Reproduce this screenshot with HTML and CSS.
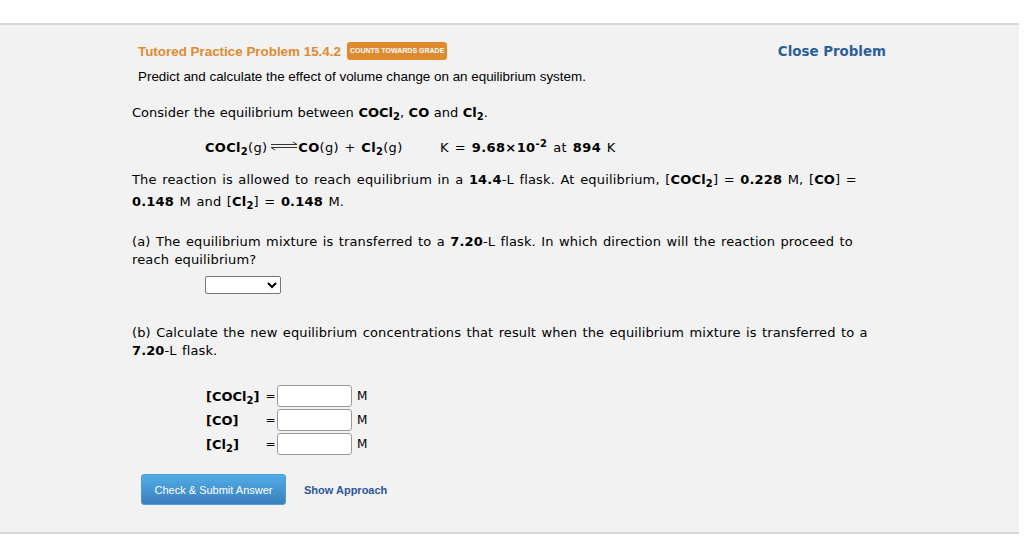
FILE: index.html
```html
<!DOCTYPE html>
<html>
<head>
<meta charset="utf-8">
<link rel="stylesheet" href="styles.css">
</head>
<body>
<div class="panel">
  <div class="header">
    <div class="head-left">
      <div class="title-line"><span class="title">Tutored Practice Problem 15.4.2</span><span class="badge">COUNTS TOWARDS GRADE</span></div>
      <div class="subtitle">Predict and calculate the effect of volume change on an equilibrium system.</div>
    </div>
    <a class="close">Close Problem</a>
  </div>
  <div class="content">
    <p class="intro">Consider the equilibrium between <b>COCl<sub>2</sub></b>, <b>CO</b> and <b>Cl<sub>2</sub></b>.</p>
    <div class="equation">
      <span class="rxn"><b>COCl<sub>2</sub></b>(g)<svg class="eqarrow" width="28" height="10" viewBox="0 0 28 10"><path d="M1 3.5H27L23 1" fill="none" stroke="#333" stroke-width="1"/><path d="M27 6.5H1L5 9" fill="none" stroke="#333" stroke-width="1"/></svg><b>CO</b>(g) + <b>Cl<sub>2</sub></b>(g)</span>
      <span class="kval">K = <b>9.68×10<sup>-2</sup></b> at <b>894</b> K</span>
    </div>
    <p class="para">The reaction is allowed to reach equilibrium in a <b>14.4</b>-L flask. At equilibrium, [<b>COCl<sub>2</sub></b>] = <b>0.228</b> M, [<b>CO</b>] = <b>0.148</b> M and [<b>Cl<sub>2</sub></b>] = <b>0.148</b> M.</p>
    <p class="qa">(a) The equilibrium mixture is transferred to a <b>7.20</b>-L flask. In which direction will the reaction proceed to reach equilibrium?</p>
    <div class="select-row"><select class="dir"><option></option></select></div>
    <p class="qb">(b) Calculate the new equilibrium concentrations that result when the equilibrium mixture is transferred to a <b>7.20</b>-L flask.</p>
    <div class="answers">
      <div class="arow"><span class="lbl">[COCl<sub>2</sub>]</span><span class="eq">=</span><input class="box" type="text"><span class="unit">M</span></div>
      <div class="arow"><span class="lbl">[CO]</span><span class="eq">=</span><input class="box" type="text"><span class="unit">M</span></div>
      <div class="arow"><span class="lbl">[Cl<sub>2</sub>]</span><span class="eq">=</span><input class="box" type="text"><span class="unit">M</span></div>
    </div>
    <div class="actions">
      <button class="submit">Check &amp; Submit Answer</button>
      <a class="approach">Show Approach</a>
    </div>
  </div>
</div>
</body>
</html>
```
FILE: styles.css
```css
html, body {
  margin: 0;
  padding: 0;
  background: #ffffff;
}
body {
  font-family: "DejaVu Sans", Verdana, sans-serif;
  font-size: 13px;
  color: #000;
}
.panel {
  margin-top: 23px;
  width: 1019px;
  height: 511px;
  box-sizing: border-box;
  background: #f2f2f2;
  border-top: 2px solid #d8d8d8;
  border-bottom: 2px solid #d8d8d8;
}
.header {
  display: flex;
  justify-content: space-between;
  align-items: flex-start;
  padding: 17px 133px 0 138px;
}
.title-line {
  display: flex;
  align-items: center;
  height: 18px;
}
.title {
  font-family: "Liberation Sans", Arial, sans-serif;
  font-weight: bold;
  font-size: 13.4px;
  color: #e08a2f;
}
.badge {
  margin-left: 6px;
  background: #e08a2f;
  color: #fff;
  font-family: "Liberation Sans", Arial, sans-serif;
  font-weight: bold;
  font-size: 7px;
  line-height: 18px;
  height: 18px;
  padding: 0 3px;
  border-radius: 3px;
}
.subtitle {
  margin-top: 8px;
  font-family: "Liberation Sans", Arial, sans-serif;
  font-size: 13.4px;
  line-height: 18px;
}
.close {
  font-weight: bold;
  font-size: 13.4px;
  color: #2a5f97;
  line-height: 18px;
  margin-top: 1px;
}
.content {
  padding-left: 132px;
  word-spacing: 1.2px;
}
b { font-weight: bold; }
sub {
  font-size: 10px;
  line-height: 0;
  vertical-align: -3px;
}
sup {
  font-size: 10px;
  line-height: 0;
  vertical-align: 5px;
}
p { margin: 0; }
.intro {
  margin-top: 18px;
  line-height: 18px;
  word-spacing: 0.4px;
}
.equation {
  margin-top: 17px;
  padding-left: 73px;
  display: flex;
  line-height: 18px;
}
.rxn { width: 235px; letter-spacing: 0.3px; }
.kval { letter-spacing: 0.4px; }
.eqarrow {
  vertical-align: 1px;
  margin: 0 0 0 3px;
}
.para {
  margin-top: 12px;
  line-height: 22px;
  width: 730px;
  letter-spacing: 0.17px;
}
.qa {
  margin-top: 20px;
  line-height: 18px;
  width: 725px;
  letter-spacing: 0.12px;
}
.select-row {
  margin-top: 7px;
  padding-left: 73px;
  height: 18px;
}
.dir {
  width: 76px;
  height: 18px;
  background: #fff;
  border: 1px solid #777;
  border-radius: 2px;
  font-size: 11px;
  display: block;
}
.qb {
  margin-top: 30px;
  line-height: 18px;
  width: 745px;
  letter-spacing: 0.1px;
}
.answers {
  margin-top: 25px;
  padding-left: 74px;
  display: flex;
  flex-direction: column;
  gap: 2px;
}
.arow {
  display: flex;
  align-items: center;
  height: 22px;
}
.lbl {
  font-weight: bold;
  width: 58px;
}
.eq {
  width: 13px;
  text-align: center;
  font-size: 12px;
}
.box {
  width: 75px;
  height: 22px;
  box-sizing: border-box;
  border: 1px solid #9a9a9a;
  border-radius: 3px;
  background: #fff;
  margin: 0;
  padding: 0;
}
.unit {
  margin-left: 5px;
  font-size: 12px;
}
.actions {
  margin-top: 19px;
  padding-left: 9px;
  display: flex;
  align-items: center;
  word-spacing: 0;
}
.submit {
  width: 145px;
  height: 31px;
  border: 1px solid #4b9bd8;
  border-radius: 3px;
  background: linear-gradient(#52ade6, #3a7fbd);
  color: #fff;
  font-family: "Liberation Sans", Arial, sans-serif;
  font-size: 11px;
  padding: 0;
}
.approach {
  margin-left: 18px;
  font-family: "Liberation Sans", Arial, sans-serif;
  font-weight: bold;
  font-size: 11px;
  color: #2b579b;
}
```
